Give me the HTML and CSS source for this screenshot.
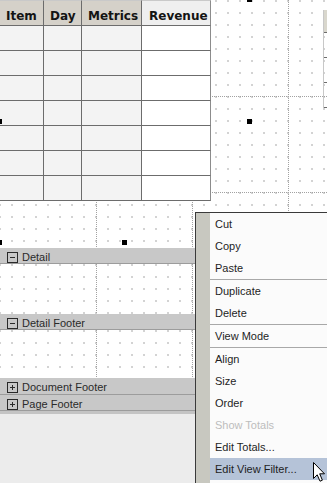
FILE: index.html
```html
<!DOCTYPE html>
<html>
<head>
<meta charset="utf-8">
<link rel="stylesheet" href="styles.css">
</head>
<body>
<div class="designer">
  <div class="section sec-top">
    <div class="report-table">
      <div class="th">Item</div><div class="th">Day</div><div class="th">Metrics</div><div class="th th-light">Revenue</div>
      <div class="td"></div><div class="td"></div><div class="td"></div><div class="td td-white"></div>
      <div class="td"></div><div class="td"></div><div class="td"></div><div class="td td-white"></div>
      <div class="td"></div><div class="td"></div><div class="td"></div><div class="td td-white"></div>
      <div class="td"></div><div class="td"></div><div class="td"></div><div class="td td-white"></div>
      <div class="td"></div><div class="td"></div><div class="td"></div><div class="td td-white"></div>
      <div class="td"></div><div class="td"></div><div class="td"></div><div class="td td-white"></div>
      <div class="td"></div><div class="td"></div><div class="td"></div><div class="td td-white"></div>
    </div>
    <div class="peek">
      <div class="peek-head"></div>
      <div class="peek-row"></div>
      <div class="peek-row"></div>
      <div class="peek-row"></div>
    </div>
    <span class="handle h-top"></span>
    <span class="handle h-mid"></span>
    <span class="handle h-left"></span>
    <span class="handle h-bl"></span>
    <span class="handle h-bm"></span>
  </div>
  <div class="band"><span class="toggle minus"></span>Detail</div>
  <div class="section sec-detail"></div>
  <div class="band"><span class="toggle minus"></span>Detail Footer</div>
  <div class="section sec-dfooter"></div>
  <div class="band band-tall"><span class="toggle plus"></span>Document Footer</div>
  <div class="band"><span class="toggle plus"></span>Page Footer</div>
  <div class="rest"></div>
</div>

<div class="menu">
  <div class="mi">Cut</div>
  <div class="mi">Copy</div>
  <div class="mi">Paste</div>
  <div class="sep"></div>
  <div class="mi">Duplicate</div>
  <div class="mi">Delete</div>
  <div class="sep"></div>
  <div class="mi">View Mode</div>
  <div class="sep"></div>
  <div class="mi">Align</div>
  <div class="mi">Size</div>
  <div class="mi">Order</div>
  <div class="mi disabled">Show Totals</div>
  <div class="mi">Edit Totals...</div>
  <div class="mi active">Edit View Filter...</div>
</div>

<svg class="cursor" width="14" height="22" viewBox="0 0 14 22">
  <path d="M1.5 1.5 L1.5 17.5 L5.2 13.8 L8 20.2 L10.4 19.2 L7.7 12.8 L12.5 12.8 Z" fill="#fff" stroke="#000" stroke-width="1" stroke-linejoin="miter"/>
</svg>
</body>
</html>
```

FILE: styles.css
```css
* { box-sizing: border-box; }
html, body { margin: 0; padding: 0; }
body {
  width: 327px;
  height: 483px;
  overflow: hidden;
  position: relative;
  background: #ececec;
  font-family: "Liberation Sans", Arial, sans-serif;
}

.designer {
  display: flex;
  flex-direction: column;
  height: 483px;
}

.section {
  position: relative;
  flex: none;
  background-color: #fff;
  background-image:
    linear-gradient(#a2a2a2 50%, transparent 0),
    linear-gradient(#a2a2a2 50%, transparent 0),
    linear-gradient(#a2a2a2 50%, transparent 0),
    radial-gradient(circle, #d2d2d2 0.7px, transparent 1.1px);
  background-size: 1px 2px, 1px 2px, 1px 2px, 12px 12px;
  background-repeat: repeat-y, repeat-y, repeat-y, repeat;
  background-position: 96px 0, 192px 0, 288px 0, -6px -5px;
}

.sec-top {
  height: 248px;
  background-image:
    linear-gradient(#a2a2a2 50%, transparent 0),
    linear-gradient(#a2a2a2 50%, transparent 0),
    linear-gradient(#a2a2a2 50%, transparent 0),
    linear-gradient(to right, #a2a2a2 50%, transparent 0),
    linear-gradient(to right, #a2a2a2 50%, transparent 0),
    radial-gradient(circle, #d2d2d2 0.7px, transparent 1.1px);
  background-size: 1px 2px, 1px 2px, 1px 2px, 2px 1px, 2px 1px, 12px 12px;
  background-repeat: repeat-y, repeat-y, repeat-y, repeat-x, repeat-x, repeat;
  background-position: 96px 0, 192px 0, 288px 0, 0 96px, 0 192px, -6px -5px;
}
.sec-detail { height: 50px; }
.sec-dfooter { height: 48px; }

/* table */
.report-table {
  display: grid;
  grid-template-columns: 44px 38px 60px 69px;
  grid-template-rows: 26px repeat(7, 25px);
  width: 211px;
}
.th, .td {
  border-right: 1px solid #6c6c6c;
  border-bottom: 1px solid #6c6c6c;
}
.th {
  background: #d5d1c9;
  border-top: 1px solid #c9c9c9;
  font-family: "DejaVu Sans", Verdana, sans-serif;
  font-weight: bold;
  font-size: 12px;
  line-height: 17px;
  padding: 7px 0 0 6px;
  color: #141414;
  white-space: nowrap;
}
.th-light { background: #efefef; padding-left: 7px; }
.td { background: #f3f3f3; }
.td-white { background: #fff; }
.th:nth-child(4n), .td:nth-child(4n) { border-right-color: #8c8c8c; }

.peek {
  position: absolute;
  left: 323px;
  top: 10px;
  width: 6px;
  border-left: 1px solid #c8c8c8;
}
.peek-head { height: 23px; background: #d9d7cd; border-bottom: 1px solid #6c6c6c; }
.peek-row { height: 25px; border-bottom: 1px solid #6c6c6c; }

.handle {
  position: absolute;
  width: 5px;
  height: 5px;
  background: #000;
}
.h-top { left: 247px; top: -3px; }
.h-mid { left: 247px; top: 119px; }
.h-left { left: -3px; top: 119px; }
.h-bl { left: -3px; top: 240px; }
.h-bm { left: 122px; top: 240px; }

/* bands */
.band {
  flex: none;
  height: 16px;
  display: flex;
  align-items: flex-start;
  padding: 4px 0 0 7px;
  background: #c8c8c8;
  border-bottom: 1px solid #9c9c9c;
  font-size: 11px;
  line-height: 11px;
  color: #2a2a2a;
  white-space: nowrap;
}
.band-tall { height: 17px; }
.toggle {
  position: relative;
  flex: none;
  width: 11px;
  height: 11px;
  border: 1px solid #2a2a2a;
  margin-right: 4px;
}
.toggle::before {
  content: "";
  position: absolute;
  left: 2px;
  top: 4px;
  width: 5px;
  height: 1px;
  background: #2a2a2a;
}
.toggle.plus::after {
  content: "";
  position: absolute;
  left: 4px;
  top: 2px;
  width: 1px;
  height: 5px;
  background: #2a2a2a;
}

.rest {
  flex: 1;
  background: #ececec;
  border-top: 3px solid #c4c4c4;
}

/* context menu */
.menu {
  position: absolute;
  left: 195px;
  top: 212px;
  width: 140px;
  bottom: 0;
  border-top: 1px solid #3a3a3a;
  border-left: 1px solid #3a3a3a;
  background: linear-gradient(to right, #c8c8c0 14px, #fbfbfb 14px);
  display: flex;
  flex-direction: column;
  font-size: 11px;
  color: #1e1e1e;
}
.mi {
  height: 22px;
  line-height: 22px;
  padding-left: 19px;
  white-space: nowrap;
}
.mi.disabled { color: #bdbdbd; }
.mi.active {
  background: linear-gradient(to right, transparent 14px, #b5c3d8 14px);
}
.sep {
  height: 1px;
  margin-left: 14px;
  background: #a8a8a8;
  flex: none;
}

.cursor {
  position: absolute;
  left: 312px;
  top: 461px;
}
```
